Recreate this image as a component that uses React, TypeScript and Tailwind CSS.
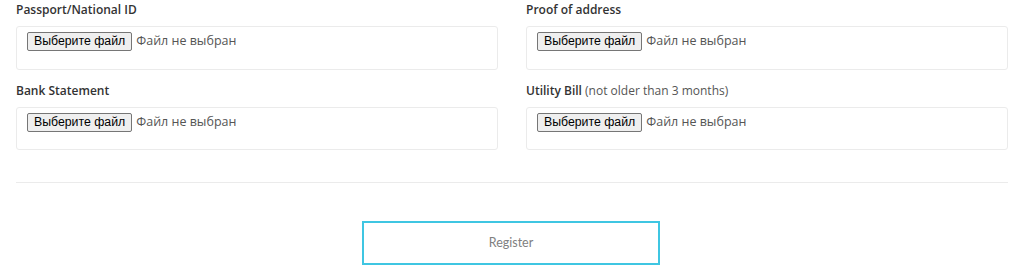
import React from "react";

function FileBox({ h }: { h: string }) {
  return (
    <div className={`${h} border border-[#ebebeb] rounded-[3px] pl-[10px] pt-[5px] flex items-start`}>
      <div className="flex items-center">
        <span
          className="inline-flex items-center h-[19px] px-[6px] border border-[#767676] rounded-[2px] bg-[#efefef] text-[12.3px] text-black leading-none"
          style={{ fontFamily: '"Liberation Sans", Arial, sans-serif' }}
        >
          Выберите файл
        </span>
        <span
          className="ml-[4px] text-[12.5px] text-[#555] leading-none"
          style={{ fontFamily: '"Open Sans", sans-serif' }}
        >
          Файл не выбран
        </span>
      </div>
    </div>
  );
}

function Field({ label, extra, h }: { label: string; extra?: string; h: string }) {
  return (
    <div className="flex flex-col">
      <div className="h-[16px] leading-[16px] mb-[8px] text-[12px] text-[#333] font-['Open_Sans',sans-serif]">
        <span className="font-semibold">{label}</span>
        {extra && <span className="font-normal text-[#555]"> {extra}</span>}
      </div>
      <FileBox h={h} />
    </div>
  );
}

export default function App() {
  return (
    <div className="w-[1024px] h-[269px] bg-white px-4 pt-[2px] font-['Open_Sans',sans-serif] overflow-hidden">
      <div className="grid grid-cols-2 gap-x-[28px] gap-y-[13px]">
        <Field label="Passport/National ID" h="h-[44px]" />
        <Field label="Proof of address" h="h-[44px]" />
        <Field label="Bank Statement" h="h-[43px]" />
        <Field label="Utility Bill" extra="(not older than 3 months)" h="h-[43px]" />
      </div>
      <div className="mt-[32px] border-t border-[#ebebeb]" />
      <div className="flex justify-center mt-[38px]">
        <button className="w-[298px] h-[44px] ml-[-2px] border-2 border-[#3fc6e2] bg-white text-[12.5px] text-[#808080] font-['Lato',sans-serif]">
          Register
        </button>
      </div>
    </div>
  );
}
